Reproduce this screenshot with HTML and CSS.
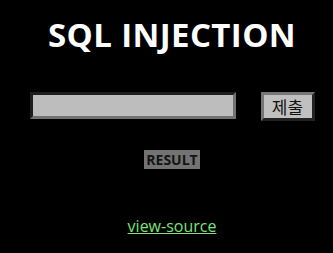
FILE: index.html
```html
<!DOCTYPE html>
<html lang="ko">
<head>
<meta charset="utf-8">
<title>SQL INJECTION</title>
<link rel="stylesheet" href="styles.css">
</head>
<body>
<main class="page">
  <h1 class="title">SQL INJECTION</h1>
  <form class="query-form">
    <input class="query-input" type="text" name="no">
    <button class="submit-btn" type="submit">제출</button>
  </form>
  <div class="result-row"><span class="result">RESULT</span></div>
  <div class="source-row"><a class="source-link" href="#">view-source</a></div>
</main>
</body>
</html>
```

FILE: styles.css
```css
html, body {
  margin: 0;
  padding: 0;
  background: #000;
}

body {
  color: #fff;
  font-family: "Open Sans", "Noto Sans CJK KR", sans-serif;
}

.page {
  display: flex;
  flex-direction: column;
  align-items: center;
  padding: 15px 0 0 11px;
}

.title {
  margin: 0;
  font-size: 33px;
  line-height: 40px;
  letter-spacing: 0.4px;
  font-weight: 700;
  color: #fff;
}

.query-form {
  display: flex;
  align-items: flex-start;
  gap: 25px;
  margin-top: 37px;
}

.query-input {
  box-sizing: border-box;
  width: 206px;
  height: 27px;
  margin: 0;
  padding: 0 4px;
  background: #bdbdbd;
  border: 3px solid;
  border-color: #1e1e1e #727272 #727272 #1e1e1e;
  outline: none;
}

.submit-btn {
  box-sizing: border-box;
  width: 54px;
  height: 29px;
  margin: 0;
  padding: 0;
  background: #c0c0c0;
  border: 3px solid;
  border-color: #767676 #222 #222 #767676;
  font-family: "Noto Sans CJK KR", sans-serif;
  font-size: 17px;
  line-height: 21px;
  color: #111;
}

.result-row {
  margin-top: 29px;
  line-height: 19px;
}

.result {
  display: inline-block;
  background: #737373;
  color: #141414;
  font-weight: 700;
  font-size: 14px;
  line-height: 19px;
  padding: 0 2px;
}

.source-row {
  margin-top: 47px;
  font-size: 16px;
  line-height: 20px;
}

.source-link {
  color: #7ae37a;
  text-decoration: underline;
}
```
